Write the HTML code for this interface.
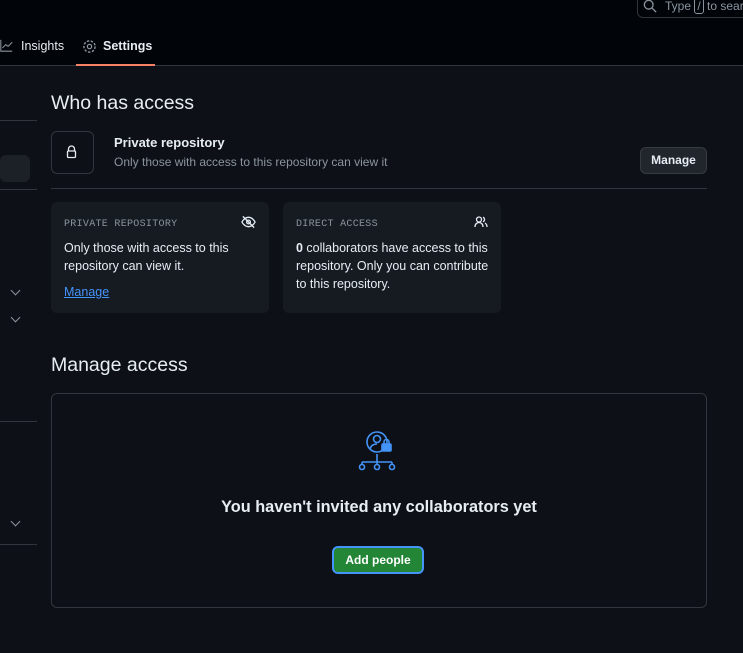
<!DOCTYPE html>
<html><head><style>
*{box-sizing:border-box;margin:0;padding:0}
body{width:743px;height:653px;overflow:hidden;background:#0d1117;font-family:"Liberation Sans",sans-serif;color:#e6edf3;position:relative}
.a{position:absolute;white-space:nowrap}
.hdr{left:0;top:0;width:743px;height:66px;background:#010409;border-bottom:1px solid #30363d}
.line{background:#30363d;height:1px}
.chev{width:7px;height:7px;border-right:1.5px solid #8b949e;border-bottom:1.5px solid #8b949e;transform:rotate(45deg)}
.card{background:#161b22;border-radius:6px}
.mono{font-family:"Liberation Mono",monospace;font-size:10px;color:#8b949e;letter-spacing:.3px}
.txt{font-size:12.5px;line-height:18px;color:#e6edf3;white-space:normal}
</style></head><body>
<div class="a hdr"></div>
<div class="a" style="left:637px;top:-8px;width:120px;height:26px;border:1px solid #30363d;border-radius:6px"></div>
<svg class="a" style="left:643px;top:-1px" width="14" height="14" viewBox="0 0 16 16"><circle cx="6.5" cy="6.5" r="5" fill="none" stroke="#8b949e" stroke-width="1.5"/><path d="M10.5 10.5L15 15" stroke="#8b949e" stroke-width="1.5"/></svg>
<div class="a" style="left:665px;top:-1px;font-size:12px;color:#8b949e">Type <span style="border:1px solid #8b949e;border-radius:3px;padding:0 2px">/</span> to search</div>
<svg class="a" style="left:0;top:39px" width="13" height="13" viewBox="0 0 16 16"><path d="M1 1v14h14" fill="none" stroke="#8b949e" stroke-width="1.3"/><path d="M3 11l4-4 3 2 5-5" fill="none" stroke="#8b949e" stroke-width="1.3"/></svg>
<div class="a" style="left:21px;top:39px;font-size:12.5px">Insights</div>
<svg class="a" style="left:82px;top:39px" width="15" height="15" viewBox="0 0 16 16"><circle cx="8" cy="8" r="2.3" fill="none" stroke="#8b949e" stroke-width="1.3"/><circle cx="8" cy="8" r="6" fill="none" stroke="#8b949e" stroke-width="1.5" stroke-dasharray="2.6 1.6"/></svg>
<div class="a" style="left:103px;top:39px;font-size:12.5px;font-weight:bold">Settings</div>
<div class="a" style="left:76px;top:64px;width:79px;height:2px;background:#f78166"></div>

<div class="a line" style="left:0;top:120px;width:37px"></div>
<div class="a" style="left:0;top:155px;width:30px;height:27px;background:#1c2128;border-radius:6px"></div>
<div class="a line" style="left:0;top:189px;width:37px"></div>
<div class="a chev" style="left:12px;top:287px"></div>
<div class="a chev" style="left:12px;top:314px"></div>
<div class="a line" style="left:0;top:421px;width:37px"></div>
<div class="a chev" style="left:12px;top:518px"></div>
<div class="a line" style="left:0;top:544px;width:37px"></div>

<div class="a" style="left:51px;top:92px;font-size:19.5px">Who has access</div>
<div class="a" style="left:51px;top:131px;width:43px;height:43px;border:1px solid #30363d;border-radius:6px"></div>
<svg class="a" style="left:65px;top:145px" width="13" height="14" viewBox="0 0 13 14"><path d="M3.5 6V4a3 3 0 016 0v2" fill="none" stroke="#e6edf3" stroke-width="1.3"/><rect x="2.5" y="6" width="8" height="6.5" rx="1" fill="none" stroke="#e6edf3" stroke-width="1.3"/></svg>
<div class="a" style="left:114px;top:135px;font-size:13px;font-weight:bold">Private repository</div>
<div class="a" style="left:114px;top:155px;font-size:12px;color:#8b949e">Only those with access to this repository can view it</div>
<div class="a" style="left:640px;top:147px;width:67px;height:27px;background:#21262d;border:1px solid #363b42;border-radius:6px;font-size:12px;font-weight:bold;text-align:center;line-height:25px">Manage</div>
<div class="a line" style="left:51px;top:188px;width:656px"></div>

<div class="a card" style="left:51px;top:202px;width:218px;height:111px"></div>
<div class="a mono" style="left:64px;top:219px">PRIVATE REPOSITORY</div>
<svg class="a" style="left:241px;top:215px" width="15" height="14" viewBox="0 0 16 14"><path d="M1 7s2.5-5 7-5 7 5 7 5-2.5 5-7 5-7-5-7-5z" fill="none" stroke="#e6edf3" stroke-width="1.4"/><circle cx="8" cy="7" r="2" fill="none" stroke="#e6edf3" stroke-width="1.4"/><path d="M2 1l12 12" stroke="#e6edf3" stroke-width="1.4"/></svg>
<div class="a txt" style="left:64px;top:239px;width:200px">Only those with access to this repository can view it.</div>
<div class="a" style="left:64px;top:285px;font-size:12.5px;color:#4493f8;text-decoration:underline">Manage</div>

<div class="a card" style="left:283px;top:202px;width:218px;height:111px"></div>
<div class="a mono" style="left:296px;top:219px">DIRECT ACCESS</div>
<svg class="a" style="left:474px;top:216px" width="14" height="12" viewBox="0 0 14 12"><circle cx="5" cy="3.5" r="2.5" fill="none" stroke="#e6edf3" stroke-width="1.3"/><path d="M1 11c0-3 2-4.5 4-4.5s4 1.5 4 4.5" fill="none" stroke="#e6edf3" stroke-width="1.3"/><path d="M9 1.2a2.5 2.5 0 010 4.6M11 7c1.3.8 2 2 2 4" fill="none" stroke="#e6edf3" stroke-width="1.3"/></svg>
<div class="a txt" style="left:296px;top:239px;width:200px"><b>0</b> collaborators have access to this repository. Only you can contribute to this repository.</div>

<div class="a" style="left:51px;top:354px;font-size:19.5px">Manage access</div>
<div class="a" style="left:51px;top:393px;width:656px;height:215px;border:1px solid #30363d;border-radius:6px"></div>
<svg class="a" style="left:355px;top:430px" width="46" height="44" viewBox="0 0 46 44" fill="none" stroke="#4493f8" stroke-width="1.6"><circle cx="22" cy="12" r="10"/><circle cx="22" cy="9" r="3.5"/><path d="M15 19c1-4 4-5 7-5"/><rect x="27" y="14" width="9" height="7" rx="1" fill="#4493f8"/><path d="M29 14v-2a2.5 2.5 0 015 0v2"/><path d="M22 24v8M7 32h30M7 32v2M22 32v2M37 32v2"/><circle cx="7" cy="37" r="2.5"/><circle cx="22" cy="37" r="2.5"/><circle cx="37" cy="37" r="2.5"/></svg>
<div class="a" style="left:51px;top:498px;width:656px;text-align:center;font-size:16.3px;font-weight:bold">You haven't invited any collaborators yet</div>
<div class="a" style="left:332px;top:546px;width:92px;height:28px;border:2px solid #4493f8;border-radius:6px;background:#238636;font-size:12px;font-weight:bold;text-align:center;line-height:24px;color:#fff">Add people</div>
</body></html>
